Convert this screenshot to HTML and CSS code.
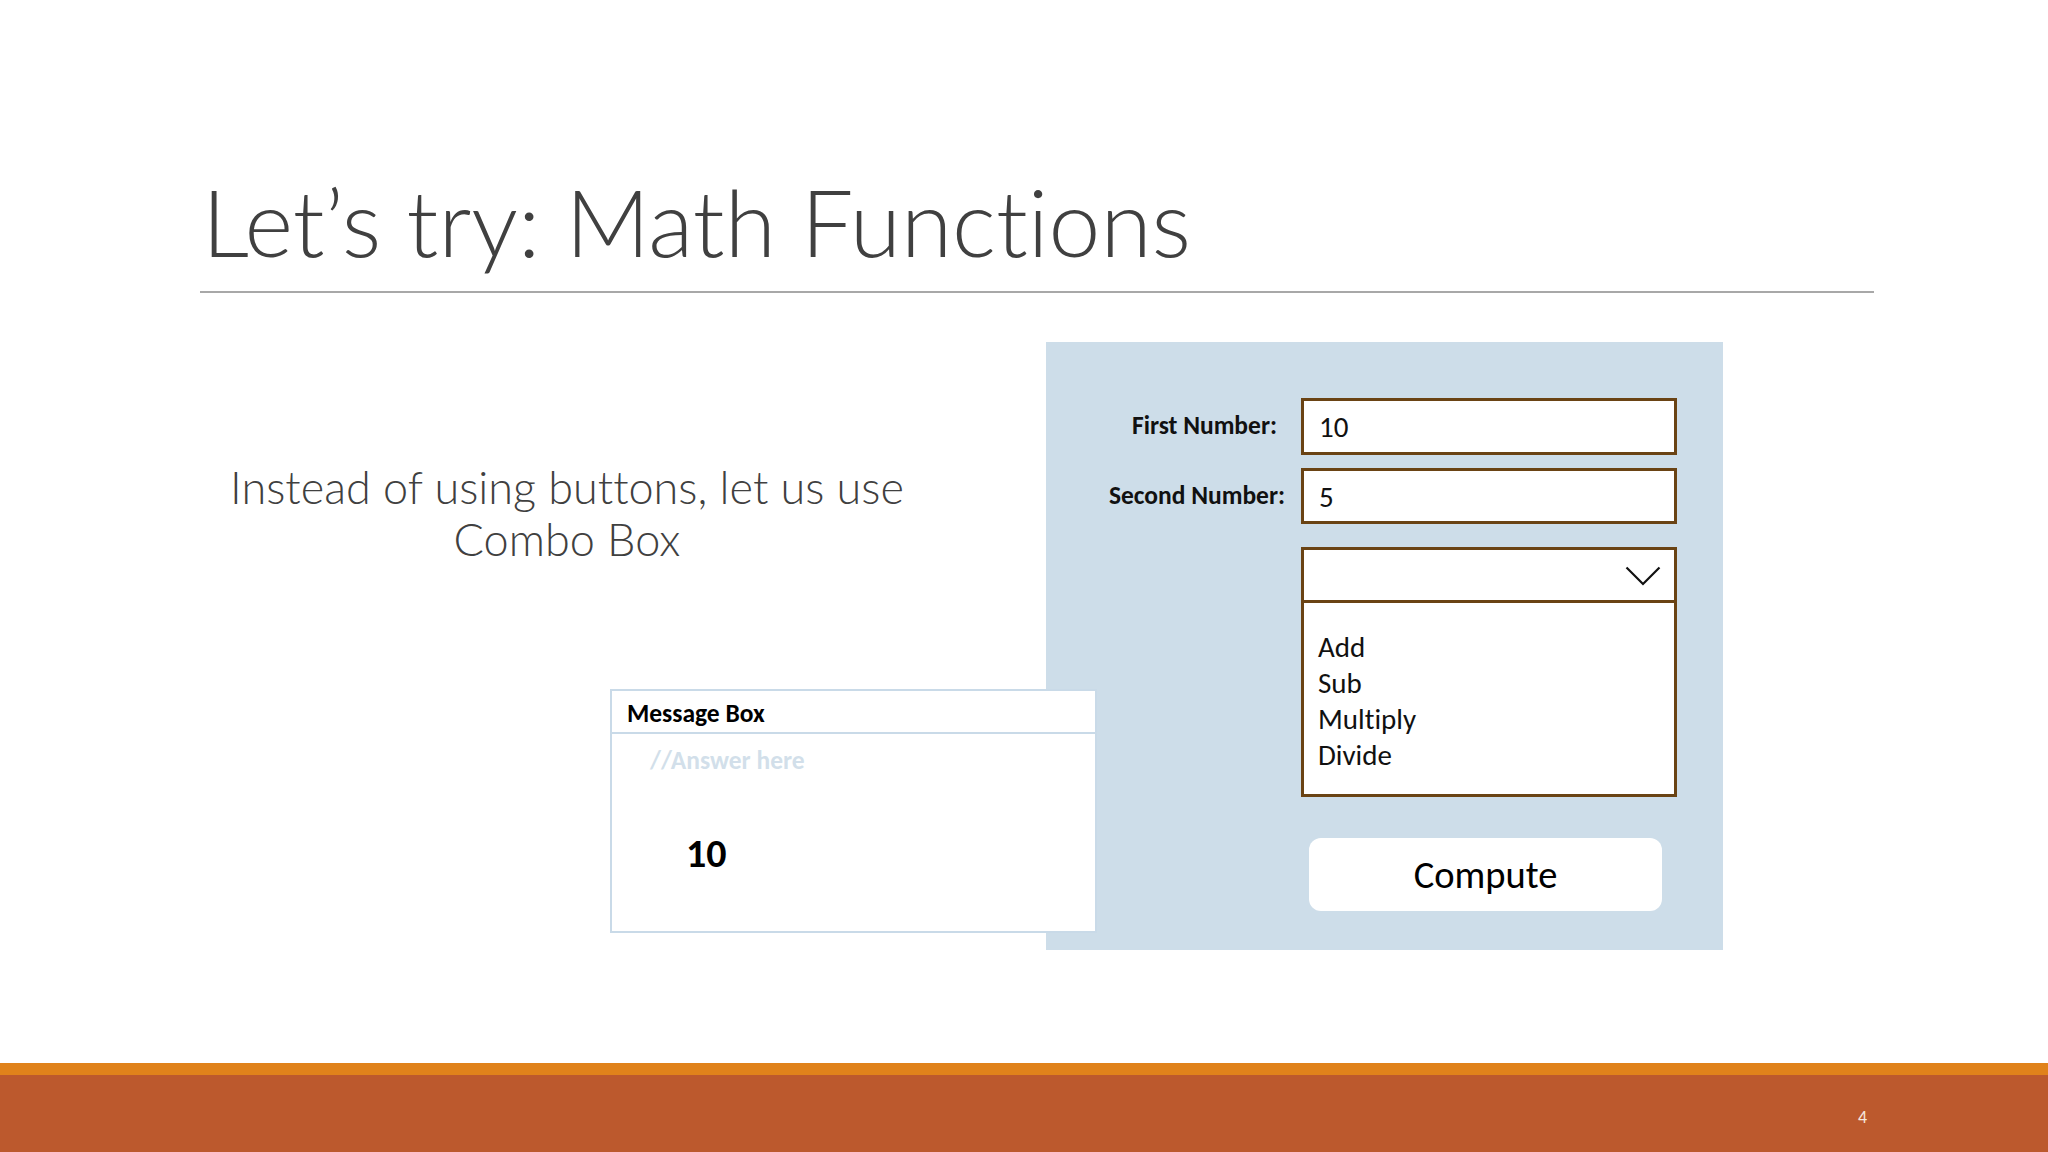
FILE: index.html
```html
<!DOCTYPE html>
<html lang="en">
<head>
<meta charset="utf-8">
<title>Let’s try: Math Functions</title>
<link rel="stylesheet" href="styles.css">
</head>
<body>
<div class="slide">
  <h1 class="title">Let’s try: Math Functions</h1>
  <div class="rule"></div>
  <div class="content">
    <div class="intro">
      <p class="intro-text">Instead of using buttons, let us use<br>Combo Box</p>
    </div>
    <div class="panel">
      <div class="row">
        <span class="label label-first">First Number:</span>
        <div class="input input-first">10</div>
      </div>
      <div class="row row-second">
        <span class="label label-second">Second Number:</span>
        <div class="input input-second">5</div>
      </div>
      <div class="combo">
        <div class="combo-head">
          <svg class="chevron" width="36" height="20" viewBox="0 0 36 20" aria-hidden="true">
            <polyline points="1.5,1.5 18,18 34.5,1.5" fill="none" stroke="#111" stroke-width="2.2"/>
          </svg>
        </div>
        <div class="combo-list">
          <div class="option">Add</div>
          <div class="option">Sub</div>
          <div class="option">Multiply</div>
          <div class="option">Divide</div>
        </div>
      </div>
      <div class="compute">Compute</div>
    </div>
    <div class="msgbox">
      <div class="msg-head">Message Box</div>
      <div class="msg-body">
        <div class="msg-hint">//Answer here</div>
        <div class="msg-answer">10</div>
      </div>
    </div>
  </div>
  <div class="footer">
    <span class="page-num">4</span>
  </div>
</div>
</body>
</html>
```

FILE: styles.css
```css
html, body {
  margin: 0;
  padding: 0;
  background: #ffffff;
}

.slide {
  position: relative;
  width: 2048px;
  height: 1152px;
  overflow: hidden;
  display: flex;
  flex-direction: column;
  background: #ffffff;
  font-family: Carlito, "Open Sans", "Liberation Sans", sans-serif;
  font-variant-ligatures: none;
  font-feature-settings: "liga" 0, "clig" 0;
  color: #404040;
}

.title {
  margin: 175px 0 0 0;
  padding-left: 202px;
  font-family: Lato, Carlito, "Open Sans", sans-serif;
  font-size: 93px;
  line-height: 93px;
  font-weight: 300;
  letter-spacing: 0;
  color: #404040;
}

.rule {
  margin: 23px 0 0 200px;
  width: 1674px;
  height: 2px;
  background: #a8a8a8;
}

.content {
  position: relative;
  margin-top: 49px;
  display: flex;
  padding-left: 200px;
}

.intro {
  width: 734px;
  margin-right: 112px;
}

.intro-text {
  margin: 119px 0 0 0;
  text-align: center;
  font-family: Lato, Carlito, "Open Sans", sans-serif;
  font-size: 45px;
  line-height: 52px;
  font-weight: 300;
  letter-spacing: 0;
  color: #404040;
}

.panel {
  width: 677px;
  height: 608px;
  box-sizing: border-box;
  padding: 56px 46px 0 0;
  background: #cddde9;
  display: flex;
  flex-direction: column;
  align-items: flex-end;
}

.row {
  display: flex;
  align-items: center;
}

.row-second {
  margin-top: 13px;
}

.label {
  font-size: 25.5px;
  font-weight: 700;
  color: #111111;
  margin-top: -2px;
}

.label-first {
  margin-right: 24px;
}

.label-second {
  margin-right: 16px;
}

.input {
  width: 376px;
  box-sizing: border-box;
  border: 3px solid #6a4314;
  background: #ffffff;
  padding: 1px 0 0 15px;
  font-size: 29px;
  color: #111111;
  display: flex;
  align-items: center;
}

.input-first {
  height: 57px;
}

.input-second {
  height: 56px;
}

.combo {
  margin-top: 23px;
  width: 376px;
}

.combo-head {
  height: 56px;
  box-sizing: border-box;
  border: 3px solid #6a4314;
  background: #ffffff;
  display: flex;
  justify-content: flex-end;
  align-items: center;
  padding-right: 13px;
}

.chevron {
  display: block;
  margin-top: 2px;
}

.combo-list {
  height: 194px;
  box-sizing: border-box;
  border: 3px solid #6a4314;
  border-top: none;
  background: #ffffff;
  padding: 26px 0 0 14px;
}

.option {
  font-size: 29px;
  line-height: 36px;
  color: #111111;
}

.compute {
  margin-top: 41px;
  margin-right: 15px;
  width: 353px;
  height: 73px;
  border-radius: 12px;
  background: #ffffff;
  display: flex;
  align-items: center;
  justify-content: center;
  font-size: 38.5px;
  color: #000000;
}

.msgbox {
  position: absolute;
  left: 610px;
  top: 347px;
  width: 487px;
  height: 244px;
  box-sizing: border-box;
  border: 2px solid #c9dae8;
  background: #ffffff;
}

.msg-head {
  height: 43px;
  box-sizing: border-box;
  padding: 9px 0 0 15px;
  border-bottom: 2px solid #c9dae8;
  font-size: 25.5px;
  line-height: 28px;
  font-weight: 700;
  color: #000000;
}

.msg-body {
  padding: 13px 0 0 38px;
}

.msg-hint {
  font-size: 25.5px;
  line-height: 28px;
  font-weight: 700;
  color: #d2dfea;
}

.msg-answer {
  margin: 55px 0 0 36px;
  font-size: 40px;
  line-height: 48px;
  font-weight: 700;
  color: #000000;
}

.footer {
  margin-top: auto;
  height: 89px;
  box-sizing: border-box;
  border-top: 12px solid #e0821b;
  background: #bc592d;
  display: flex;
  justify-content: flex-end;
  padding: 31px 181px 0 0;
}

.page-num {
  font-size: 18px;
  line-height: 22px;
  color: #f6e6dc;
}
```
